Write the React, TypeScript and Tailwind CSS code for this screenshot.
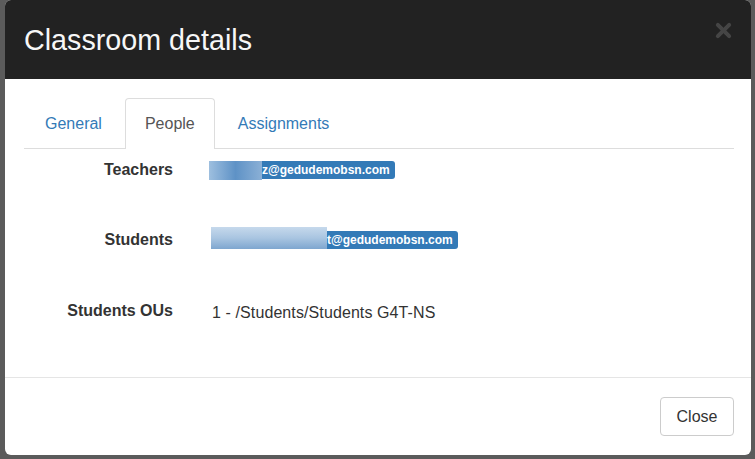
import React from "react"

function EmailBadge({ hidden, email, tall }: { hidden: number; email: string; tall?: boolean }) {
  return (
    <span className="relative inline-flex h-[18px] items-center rounded-[3px] bg-[#337ab7] pr-[5px] text-[12px] font-bold leading-none text-white">
      <span
        className={
          tall
            ? "-mt-[4px] h-[22px] self-start bg-gradient-to-b from-[#c6d9ec] via-[#a9c5e1] to-[#7ea6cf]"
            : "h-[19px] self-start bg-gradient-to-r from-[#9ebfdf] via-[#5e92c6] to-[#8bb0d6]"
        }
        style={{ width: hidden }}
      />
      <span>{email}</span>
    </span>
  )
}

export default function App() {
  const tabs = ["General", "People", "Assignments"]
  const active = "People"

  return (
    <div className="h-[459px] w-[755px] overflow-hidden bg-[#5b5b5b] pl-[5px] font-['Liberation_Sans',Arial,sans-serif] text-[#333]">
      <div className="flex h-[455px] w-[746px] flex-col overflow-hidden rounded-[6px] bg-white">

        {/* header */}
        <div className="flex h-[79px] shrink-0 items-center justify-between bg-[#222] pl-[19px] pr-[19px]">
          <h1 className="text-[28.7px] leading-8 text-[#f7f7f7]">Classroom details</h1>
          <svg viewBox="0 0 18 18" className="mb-[18px] h-[17px] w-[17px]" fill="none" stroke="#454545" strokeWidth="4.2" strokeLinecap="round">
            <path d="M3 3l12 12" />
            <path d="M15 3L3 15" />
          </svg>
        </div>

        {/* body */}
        <div className="h-[298px] shrink-0 pl-[19px] pr-[17px] pt-[19px]">
          <div className="flex border-b border-[#ddd]">
            {tabs.map((t) => (
              <div
                key={t}
                className={
                  t === active
                    ? "-mb-px mr-[2px] h-[51px] rounded-t-[4px] border border-b-0 border-[#ddd] bg-white px-[19px] pt-[14px] text-[16px] leading-[22px] text-[#555]"
                    : "mr-[2px] h-[50px] border border-transparent px-[20px] pt-[14px] text-[16px] leading-[22px] text-[#337ab7]"
                }
              >
                {t}
              </div>
            ))}
          </div>

          <div className="mt-[10px] grid grid-cols-[149px_1fr] gap-x-[36px] gap-y-[48px] text-[16px] leading-[22px]">
            <div className="text-right font-bold">Teachers</div>
            <div className="flex items-center">
              <EmailBadge hidden={53} email="z@gedudemobsn.com" />
            </div>

            <div className="text-right font-bold">Students</div>
            <div className="flex items-center pl-[2px]">
              <EmailBadge hidden={116} email="t@gedudemobsn.com" tall />
            </div>

            <div className="mt-[1px] text-right font-bold">Students OUs</div>
            <div className="mt-[3px] pl-[3px] tracking-[0.1px]">1 - /Students/Students G4T-NS</div>
          </div>
        </div>

        {/* footer */}
        <div className="flex flex-1 items-center justify-end border-t border-[#e5e5e5] pr-[17px]">
          <button className="h-[39px] w-[74px] rounded-[4px] border border-[#ccc] bg-white text-[16px] text-[#333]">
            Close
          </button>
        </div>
      </div>
    </div>
  )
}
